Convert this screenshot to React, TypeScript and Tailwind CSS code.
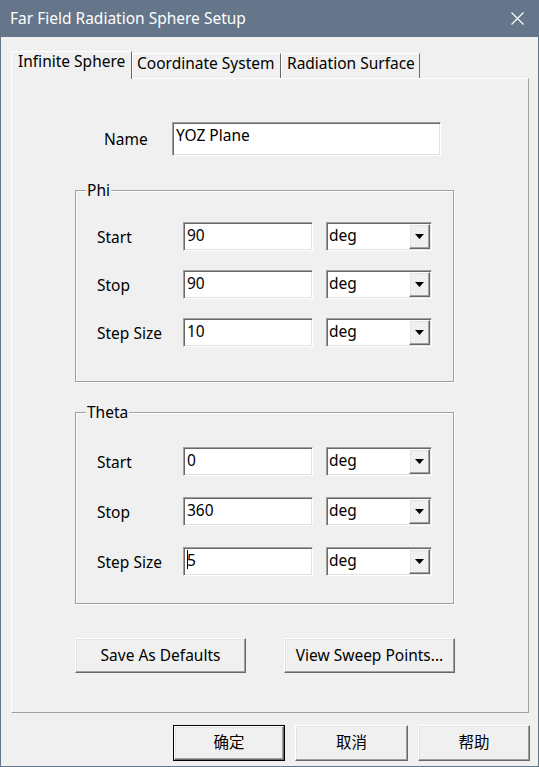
import React from 'react';

const font = "font-['Noto_Sans','Noto_Sans_CJK_SC',sans-serif]";

const sunken =
  'bg-white border border-t-[#a0a0a0] border-l-[#a0a0a0] border-b-white border-r-white shadow-[inset_1px_1px_0_#696969,inset_-1px_-1px_0_#e3e3e3]';

const raised =
  'bg-[#f0f0f0] border border-t-white border-l-white border-b-[#696969] border-r-[#696969] shadow-[inset_-1px_-1px_0_#a0a0a0,inset_1px_1px_0_#e3e3e3]';

const TextBox: React.FC<{ value: string; caret?: boolean; className?: string }> = ({ value, caret, className }) => (
  <div className={`${sunken} ${className ?? ''} flex items-start pl-[3px] pt-[2px] text-[15.5px] leading-[20px] text-black`}>
    {caret && <span className="w-px h-[19px] bg-black mr-[-1px]" />}
    <span>{value}</span>
  </div>
);

const UnitSelect: React.FC = () => (
  <div className={`${sunken} w-[106px] h-[29px] flex items-stretch text-[15.5px] text-black`}>
    <span className="flex-1 pl-[2px] pt-[2px] leading-[20px]">deg</span>
    <div className={`${raised} w-[21px] m-[1px] flex items-center justify-center`}>
      <svg width="9" height="5" viewBox="0 0 9 5">
        <path d="M0 0h9L4.5 5z" fill="#000" />
      </svg>
    </div>
  </div>
);

const SweepRow: React.FC<{ label: string; value: string; caret?: boolean }> = ({ label, value, caret }) => (
  <div className="flex items-center">
    <span className="w-[86px] pt-[3px] text-[15.5px] text-black">{label}</span>
    <TextBox value={value} caret={caret} className="w-[130px] h-[29px]" />
    <div className="ml-[13px]">
      <UnitSelect />
    </div>
  </div>
);

const Group: React.FC<{ title: string; rows: { label: string; value: string; caret?: boolean }[]; top: string; gap: string }> = ({
  title,
  rows,
  top,
  gap,
}) => (
  <div className="relative w-[379px] h-[192px] border border-[#a0a0a0] shadow-[1px_1px_0_#ffffff,inset_1px_1px_0_#ffffff]">
    <span className="absolute left-[10px] top-[-11px] px-[1px] bg-[#f0f0f0] text-[15.5px] leading-[20px] text-black">{title}</span>
    <div className={`flex flex-col pl-[21px] ${top} ${gap}`}>
      {rows.map((r) => (
        <SweepRow key={r.label} {...r} />
      ))}
    </div>
  </div>
);

const App: React.FC = () => {
  return (
    <div className={`${font} w-[539px] h-[767px] bg-[#f0f0f0] border-x border-b border-[#65758a] flex flex-col`}>
      {/* title bar */}
      <div className="h-[37px] -mx-px bg-[#65758a] flex items-center justify-between pl-[10px] pr-[15px]">
        <span className="text-white text-[15.5px] leading-none">Far Field Radiation Sphere Setup</span>
        <svg width="13" height="13" viewBox="0 0 13 13">
          <path d="M0.5 0.5l12 12M12.5 0.5l-12 12" stroke="#fff" strokeWidth="1.2" />
        </svg>
      </div>

      <div className="pl-[10px] pt-[14px]">
        {/* tabs */}
        <div className="flex items-end h-[27px] text-[15.5px] text-black">
          <div className="relative z-10 w-[121px] h-[28px] -mb-px bg-[#f0f0f0] border-t border-l border-white border-r border-r-[#696969] pl-[6px] leading-[18px]">
            Infinite Sphere
          </div>
          <div className="w-[149px] h-[25px] border-t border-l border-white border-r border-r-[#696969] pl-[4px] leading-[18px]">
            Coordinate System
          </div>
          <div className="w-[139px] h-[25px] border-t border-l border-white border-r border-r-[#696969] pl-[5px] leading-[18px]">
            Radiation Surface
          </div>
        </div>

        {/* panel */}
        <div className="w-[518px] h-[635px] border border-t-white border-l-white border-r-[#a0a0a0] border-b-[#a0a0a0] flex flex-col pl-[63px]">
          <div className="flex items-center mt-[43px] ml-[29px]">
            <span className="w-[68px] pt-[2px] text-[15.5px] text-black">Name</span>
            <TextBox value="YOZ Plane" className="w-[269px] h-[34px]" />
          </div>

          <div className="mt-[34px]">
            <Group
              title="Phi"
              top="pt-[31px]"
              gap="gap-[19px]"
              rows={[
                { label: 'Start', value: '90' },
                { label: 'Stop', value: '90' },
                { label: 'Step Size', value: '10' },
              ]}
            />
          </div>

          <div className="mt-[30px]">
            <Group
              title="Theta"
              top="pt-[34px]"
              gap="gap-[21px]"
              rows={[
                { label: 'Start', value: '0' },
                { label: 'Stop', value: '360' },
                { label: 'Step Size', value: '5', caret: true },
              ]}
            />
          </div>

          <div className="flex gap-[38px] mt-[34px] text-[15.5px] text-black">
            <button className={`${raised} w-[171px] h-[35px]`}>Save As Defaults</button>
            <button className={`${raised} w-[171px] h-[35px]`}>View Sweep Points...</button>
          </div>
        </div>

        {/* dialog buttons */}
        <div className="flex gap-[10px] mt-[12px] ml-[162px] text-[15.5px] text-black">
          <button className="w-[112px] h-[36px] border border-black">
            <div className={`${raised} w-full h-full flex items-center justify-center`}>确定</div>
          </button>
          <button className={`${raised} w-[113px] h-[36px]`}>取消</button>
          <button className={`${raised} w-[112px] h-[36px]`}>帮助</button>
        </div>
      </div>
    </div>
  );
};

export default App;
